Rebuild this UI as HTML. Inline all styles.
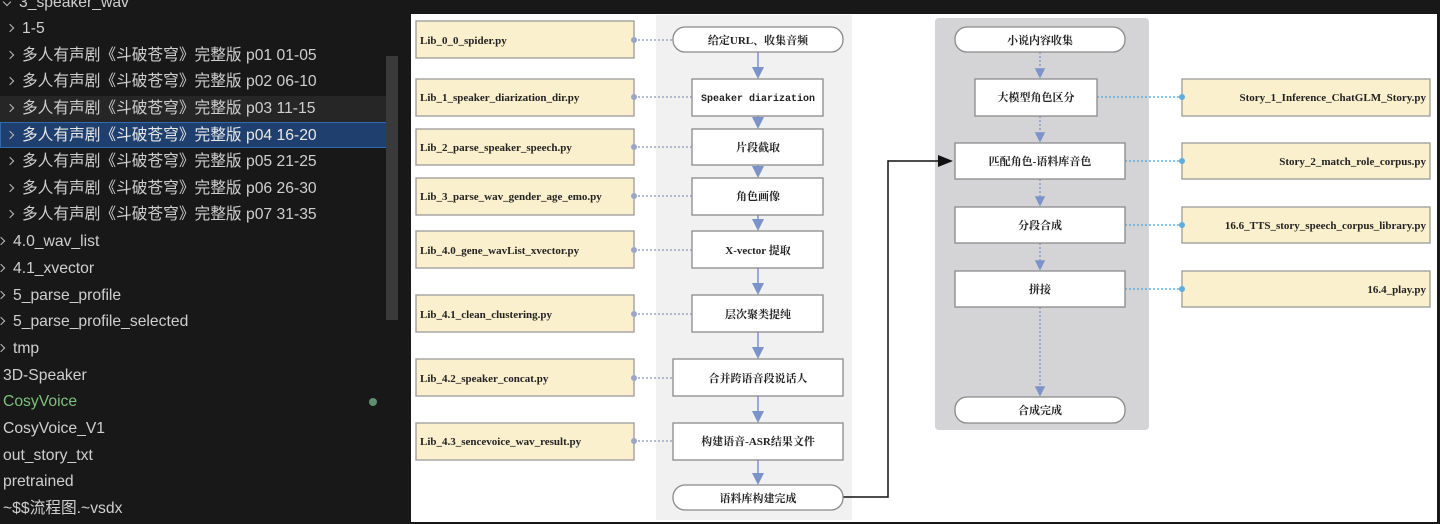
<!DOCTYPE html>
<html><head><meta charset="utf-8"><style>
*{margin:0;padding:0;box-sizing:border-box}
body{width:1440px;height:524px;background:#181818;overflow:hidden;position:relative;font-family:"Liberation Sans","Noto Sans CJK SC",sans-serif}
.r{position:absolute;left:0;width:398px;height:26px;color:#cfcfcf;font-size:15.7px;line-height:26px;white-space:nowrap}
.sel{background:#1f3f6e;border:1px solid #2f6bb0}
.hov{background:#262626}
.ch{display:inline-block;width:6px;height:6px;border-right:1.5px solid #bbb;border-top:1.5px solid #bbb;transform:rotate(45deg);margin-right:9px;vertical-align:2px}
#sb{position:absolute;left:386px;top:56px;width:12px;height:264px;background:#3a3a3a}
#img{position:absolute;left:411px;top:14px;width:1026px;height:508px;background:#fff}
svg text{font-family:"Liberation Serif","Noto Serif CJK SC",serif;font-weight:bold;font-size:11px;fill:#222}
</style></head><body>
<div class="r" style="top:-10px;padding-left:4px"><span class="ch" style="transform:rotate(135deg)"></span>3_speaker_wav</div>
<div class="r" style="top:16px;padding-left:7px"><span class="ch"></span>1-5</div>
<div class="r" style="top:43px;padding-left:7px"><span class="ch"></span>多人有声剧《斗破苍穹》完整版 p01 01-05</div>
<div class="r" style="top:69px;padding-left:7px"><span class="ch"></span>多人有声剧《斗破苍穹》完整版 p02 06-10</div>
<div class="r hov" style="top:96px;padding-left:7px"><span class="ch"></span>多人有声剧《斗破苍穹》完整版 p03 11-15</div>
<div class="r sel" style="top:122px;padding-left:6px;color:#e8e8e8"><span class="ch"></span>多人有声剧《斗破苍穹》完整版 p04 16-20</div>
<div class="r" style="top:149px;padding-left:7px"><span class="ch"></span>多人有声剧《斗破苍穹》完整版 p05 21-25</div>
<div class="r" style="top:176px;padding-left:7px"><span class="ch"></span>多人有声剧《斗破苍穹》完整版 p06 26-30</div>
<div class="r" style="top:202px;padding-left:7px"><span class="ch"></span>多人有声剧《斗破苍穹》完整版 p07 31-35</div>
<div class="r" style="top:229px;padding-left:1px"><span class="ch" style="margin-left:-3px"></span>4.0_wav_list</div>
<div class="r" style="top:256px;padding-left:1px"><span class="ch" style="margin-left:-3px"></span>4.1_xvector</div>
<div class="r" style="top:283px;padding-left:1px"><span class="ch" style="margin-left:-3px"></span>5_parse_profile</div>
<div class="r" style="top:309px;padding-left:1px"><span class="ch" style="margin-left:-3px"></span>5_parse_profile_selected</div>
<div class="r" style="top:336px;padding-left:1px"><span class="ch" style="margin-left:-3px"></span>tmp</div>
<div class="r" style="top:363px;padding-left:3px">3D-Speaker</div>
<div class="r" style="top:389px;padding-left:3px;color:#7fbf7f">CosyVoice<span style="position:absolute;left:369px;top:9px;width:8px;height:8px;border-radius:50%;background:#5f8f6f"></span></div>
<div class="r" style="top:416px;padding-left:3px">CosyVoice_V1</div>
<div class="r" style="top:443px;padding-left:3px">out_story_txt</div>
<div class="r" style="top:469px;padding-left:3px">pretrained</div>
<div class="r" style="top:496px;padding-left:3px">~$$流程图.~vsdx</div>
<div id="sb"></div>
<div id="img"></div>
<svg width="1440" height="524" style="position:absolute;left:0;top:0">
<defs><marker id="a" markerWidth="8" markerHeight="8" refX="6" refY="4" orient="auto"><path d="M0,0L8,4L0,8z" fill="#7b93c9"/></marker>
<marker id="b" markerWidth="10" markerHeight="10" refX="8" refY="5" orient="auto"><path d="M0,1L10,5L0,9z" fill="#111"/></marker></defs>
<rect x="656" y="15" width="196" height="505" fill="#f1f1f1"/>
<rect x="935" y="18" width="214" height="412" rx="4" fill="#d4d4d6"/>
<g fill="#fbf0cd" stroke="#9a9a9a" stroke-width="1.3">
<rect x="416" y="21" width="218" height="37"/><rect x="416" y="79" width="218" height="37"/><rect x="416" y="129" width="218" height="36"/><rect x="416" y="178" width="218" height="37"/><rect x="416" y="231" width="218" height="37"/><rect x="416" y="295" width="218" height="37"/><rect x="416" y="359" width="218" height="37"/><rect x="416" y="423" width="218" height="37"/>
<rect x="1182" y="79" width="248" height="37"/><rect x="1182" y="143" width="248" height="36"/><rect x="1182" y="207" width="248" height="36"/><rect x="1182" y="271" width="248" height="36"/>
</g>
<g stroke="#9aa6c8" stroke-dasharray="2,2" stroke-width="1.5">
<line x1="634" y1="40" x2="673" y2="40"/><line x1="634" y1="97" x2="692" y2="97"/><line x1="634" y1="147" x2="692" y2="147"/><line x1="634" y1="196" x2="692" y2="196"/><line x1="634" y1="250" x2="692" y2="250"/><line x1="634" y1="314" x2="692" y2="314"/><line x1="634" y1="378" x2="673" y2="378"/><line x1="634" y1="441" x2="673" y2="441"/>
</g>
<g fill="#9aa6c8"><circle cx="634" cy="40" r="3"/><circle cx="634" cy="97" r="3"/><circle cx="634" cy="147" r="3"/><circle cx="634" cy="196" r="3"/><circle cx="634" cy="250" r="3"/><circle cx="634" cy="314" r="3"/><circle cx="634" cy="378" r="3"/><circle cx="634" cy="441" r="3"/></g>
<g stroke="#5bb0e0" stroke-dasharray="2,2" stroke-width="1.5">
<line x1="1097" y1="97" x2="1182" y2="97"/><line x1="1125" y1="161" x2="1182" y2="161"/><line x1="1125" y1="225" x2="1182" y2="225"/><line x1="1125" y1="289" x2="1182" y2="289"/></g>
<g fill="#5bb0e0"><circle cx="1182" cy="97" r="3"/><circle cx="1182" cy="161" r="3"/><circle cx="1182" cy="225" r="3"/><circle cx="1182" cy="289" r="3"/></g>
<g stroke="#7b93c9" stroke-width="1.5" marker-end="url(#a)">
<line x1="758" y1="52" x2="758" y2="76"/><line x1="758" y1="116" x2="758" y2="126"/><line x1="758" y1="165" x2="758" y2="175"/><line x1="758" y1="215" x2="758" y2="228"/><line x1="758" y1="268" x2="758" y2="292"/><line x1="758" y1="332" x2="758" y2="356"/><line x1="758" y1="396" x2="758" y2="420"/><line x1="758" y1="460" x2="758" y2="482"/>
</g>
<g stroke="#7b93c9" stroke-width="1.3" stroke-dasharray="2,2" marker-end="url(#a)">
<line x1="1040" y1="52" x2="1040" y2="76"/><line x1="1040" y1="116" x2="1040" y2="140"/><line x1="1040" y1="179" x2="1040" y2="204"/><line x1="1040" y1="243" x2="1040" y2="268"/><line x1="1040" y1="307" x2="1040" y2="394"/>
</g>
<polyline points="843,497 888,497 888,161 950,161" fill="none" stroke="#111" stroke-width="1.5" marker-end="url(#b)"/>
<g fill="#fff" stroke="#8a8a8a" stroke-width="1.3">
<rect x="673" y="27" width="170" height="25" rx="12"/><rect x="692" y="79" width="131" height="37"/><rect x="692" y="129" width="131" height="36"/><rect x="692" y="178" width="131" height="37"/><rect x="692" y="231" width="131" height="37"/><rect x="692" y="295" width="131" height="37"/><rect x="673" y="359" width="170" height="37"/><rect x="673" y="423" width="170" height="37"/><rect x="673" y="485" width="170" height="25" rx="12"/>
<rect x="955" y="27" width="170" height="25" rx="12"/><rect x="975" y="79" width="122" height="37"/><rect x="955" y="143" width="170" height="36"/><rect x="955" y="207" width="170" height="36"/><rect x="955" y="271" width="170" height="36"/><rect x="955" y="397" width="170" height="26" rx="12"/>
</g>
<g>
<text x="420" y="44">Lib_0_0_spider.py</text><text x="420" y="101">Lib_1_speaker_diarization_dir.py</text><text x="420" y="151">Lib_2_parse_speaker_speech.py</text><text x="420" y="200">Lib_3_parse_wav_gender_age_emo.py</text><text x="420" y="254">Lib_4.0_gene_wavList_xvector.py</text><text x="420" y="318">Lib_4.1_clean_clustering.py</text><text x="420" y="382">Lib_4.2_speaker_concat.py</text><text x="420" y="445">Lib_4.3_sencevoice_wav_result.py</text>
</g>
<g text-anchor="end">
<text x="1426" y="101">Story_1_Inference_ChatGLM_Story.py</text><text x="1426" y="165">Story_2_match_role_corpus.py</text><text x="1426" y="229">16.6_TTS_story_speech_corpus_library.py</text><text x="1426" y="293">16.4_play.py</text>
</g>
<g text-anchor="middle" style="font-weight:normal">
<text x="758" y="44">给定URL、收集音频</text><text x="758" y="101" style="font-family:'Liberation Mono',monospace;font-size:10px">Speaker diarization</text><text x="758" y="151">片段截取</text><text x="758" y="200">角色画像</text><text x="758" y="254">X-vector 提取</text><text x="758" y="318">层次聚类提纯</text><text x="758" y="382">合并跨语音段说话人</text><text x="758" y="445">构建语音-ASR结果文件</text><text x="758" y="502">语料库构建完成</text>
<text x="1040" y="44">小说内容收集</text><text x="1036" y="101">大模型角色区分</text><text x="1040" y="165">匹配角色-语料库音色</text><text x="1040" y="229">分段合成</text><text x="1040" y="293">拼接</text><text x="1040" y="414">合成完成</text>
</g>
</svg>
</body></html>
